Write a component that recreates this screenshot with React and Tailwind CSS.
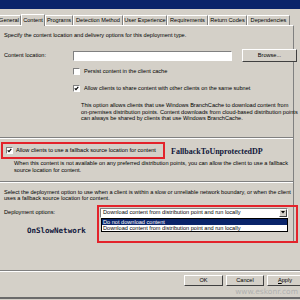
import React from "react";

const tabs = [
  { label: "General", w: "w-[24px]" },
  { label: "Content", w: "w-[24px]", active: true },
  { label: "Programs", w: "w-[28px]" },
  { label: "Detection Method", w: "w-[50px]" },
  { label: "User Experience", w: "w-[44px]" },
  { label: "Requirements", w: "w-[41px]" },
  { label: "Return Codes", w: "w-[39px]" },
  { label: "Dependencies", w: "w-[43px]" },
];

function Check({ checked }) {
  return (
    <span className="w-[7px] h-[7px] bg-white border border-t-[#808080] border-l-[#808080] border-b-white border-r-white flex items-center justify-center shrink-0">
      {checked && (
        <svg width="5" height="5" viewBox="0 0 7 7">
          <path d="M1 3.2 L2.8 5.2 L6 1.2" stroke="#000" strokeWidth="1.6" fill="none" />
        </svg>
      )}
    </span>
  );
}

function Button({ children, w }) {
  return (
    <div className={`${w} h-[11px] bg-[#d4d0c8] border border-t-white border-l-white border-r-[#404040] border-b-[#404040] flex items-center justify-center shrink-0`}>
      {children}
    </div>
  );
}

export default function App() {
  return (
    <div className="w-[300px] h-[300px] bg-[#d4d0c8] overflow-hidden flex flex-col text-[5.6px] leading-[7px] text-black font-['Liberation_Sans',Arial,sans-serif]">
      {/* title bar */}
      <div className="h-[9px] bg-[#0a246a] shrink-0" />

      {/* tabs */}
      <div className="mt-[4px] h-[12px] flex items-end shrink-0 ml-[-3px]">
        {tabs.map((t) => (
          <div
            key={t.label}
            className={`${t.w} ${t.active ? "h-[12px] relative top-[1px] bg-[#d4d0c8] z-10" : "h-[10px]"} border-t border-l border-t-white border-l-white border-r border-r-[#808080] flex items-center justify-center whitespace-nowrap shrink-0`}
          >
            {t.label}
          </div>
        ))}
      </div>

      {/* panel */}
      <div className="border-t border-t-white flex flex-col shrink-0 w-[294px] border-r border-r-[#808080]">
        <div className="mt-[6px] pl-[4px] whitespace-nowrap">
          Specify the content location and delivery options for this deployment type.
        </div>

        <div className="mt-[10px] h-[13px] flex items-center">
          <div className="w-[73px] pl-[4px] shrink-0">Content location:</div>
          <div className="w-[159px] h-[10px] bg-white border border-t-[#808080] border-l-[#808080] border-b-white border-r-white shrink-0" />
          <div className="ml-[10px]">
            <Button w="w-[55px] h-[13px]">Browse...</Button>
          </div>
        </div>

        <div className="mt-[6px] h-[7px] flex items-center pl-[73px] gap-[4px] whitespace-nowrap">
          <Check />
          <span>Persist content in the client cache</span>
        </div>

        <div className="mt-[10px] h-[7px] flex items-center pl-[73px] gap-[4px] whitespace-nowrap">
          <Check checked />
          <span>Allow clients to share content with other clients on the same subnet</span>
        </div>

        <div className="mt-[10px] pl-[81px] leading-[6.7px] whitespace-nowrap">
          <div>This option allows clients that use Windows BranchCache to download content from</div>
          <div>on-premises distribution points. Content downloads from cloud-based distribution points</div>
          <div>can always be shared by clients that use Windows BranchCache.</div>
        </div>

        <div className="mt-[15px] h-[2px] border-t border-t-[#808080] border-b border-b-white" />

        <div className="mt-[3px] flex items-center">
          <div className="ml-[1px] w-[164px] h-[17px] border-2 border-[#e3232b] flex items-center pl-[3px] gap-[3px] whitespace-nowrap shrink-0">
            <Check checked />
            <span>Allow clients to use a fallback source location for content</span>
          </div>
          <div className="ml-[6px] mt-[2px] font-['Liberation_Serif',serif] font-bold text-[8px] text-[#10163a] whitespace-nowrap">
            FallbackToUnprotectedDP
          </div>
        </div>

        <div className="mt-[1px] pl-[14px] leading-[6.7px] whitespace-nowrap">
          <div>When this content is not available on any preferred distribution points, you can allow the client to use a fallback</div>
          <div>source location for content.</div>
        </div>

        <div className="mt-[7px] h-[2px] border-t border-t-[#808080] border-b border-b-white" />

        <div className="mt-[6px] pl-[4px] leading-[6.5px] whitespace-nowrap">
          <div>Select the deployment option to use when a client is within a slow or unreliable network boundary, or when the client</div>
          <div>uses a fallback source location for content.</div>
        </div>

        <div className="mt-[3px] flex">
          <div className="w-[97px] pl-[4px] pt-[4px] shrink-0">
            <div>Deployment options:</div>
            <div className="mt-[10px] pl-[23px] font-['DejaVu_Sans_Mono',monospace] font-bold text-[7.5px] leading-[9px] text-[#10163a]">
              OnSlowNetwork
            </div>
          </div>
          <div className="w-[201px] h-[38px] border-2 border-[#e3232b] shrink-0 relative z-10 pl-[1px] pt-[1px]">
            <div className="w-[188px] h-[10px] bg-white border border-t-[#808080] border-l-[#808080] border-b-white border-r-white flex items-center justify-between">
              <span className="pl-[2px] whitespace-nowrap">Download content from distribution point and run locally</span>
              <span className="w-[8px] h-[8px] bg-[#d4d0c8] border border-t-white border-l-white border-r-[#404040] border-b-[#404040] flex items-center justify-center">
                <svg width="4" height="3" viewBox="0 0 4 3">
                  <path d="M0 0 H4 L2 2.5 Z" fill="#000" />
                </svg>
              </span>
            </div>
            <div className="ml-[1px] w-[187px] border border-black bg-white">
              <div className="h-[6px] bg-[#0a246a] text-white pl-[1px] leading-[6px] whitespace-nowrap">Do not download content</div>
              <div className="h-[6px] pl-[1px] leading-[6px] whitespace-nowrap">Download content from distribution point and run locally</div>
            </div>
          </div>
        </div>
      </div>

      <div className="mt-[27px] h-[2px] border-t border-t-[#808080] border-b border-b-white shrink-0" />

      <div className="mt-[3px] flex pl-[184px] gap-[3px] shrink-0">
        <Button w="w-[39px]">OK</Button>
        <Button w="w-[38px]">Cancel</Button>
        <Button w="w-[36px]"><span className="underline">A</span>pply</Button>
      </div>

      <div className="h-[11px] flex justify-end items-center shrink-0 pr-[2px] text-[7.5px] text-[#b0b0b0] font-['DejaVu_Sans',sans-serif] whitespace-nowrap">
        www.eskonr.com
      </div>
      <div className="h-[2px] bg-[#6b6b6b] shrink-0" />
    </div>
  );
}
